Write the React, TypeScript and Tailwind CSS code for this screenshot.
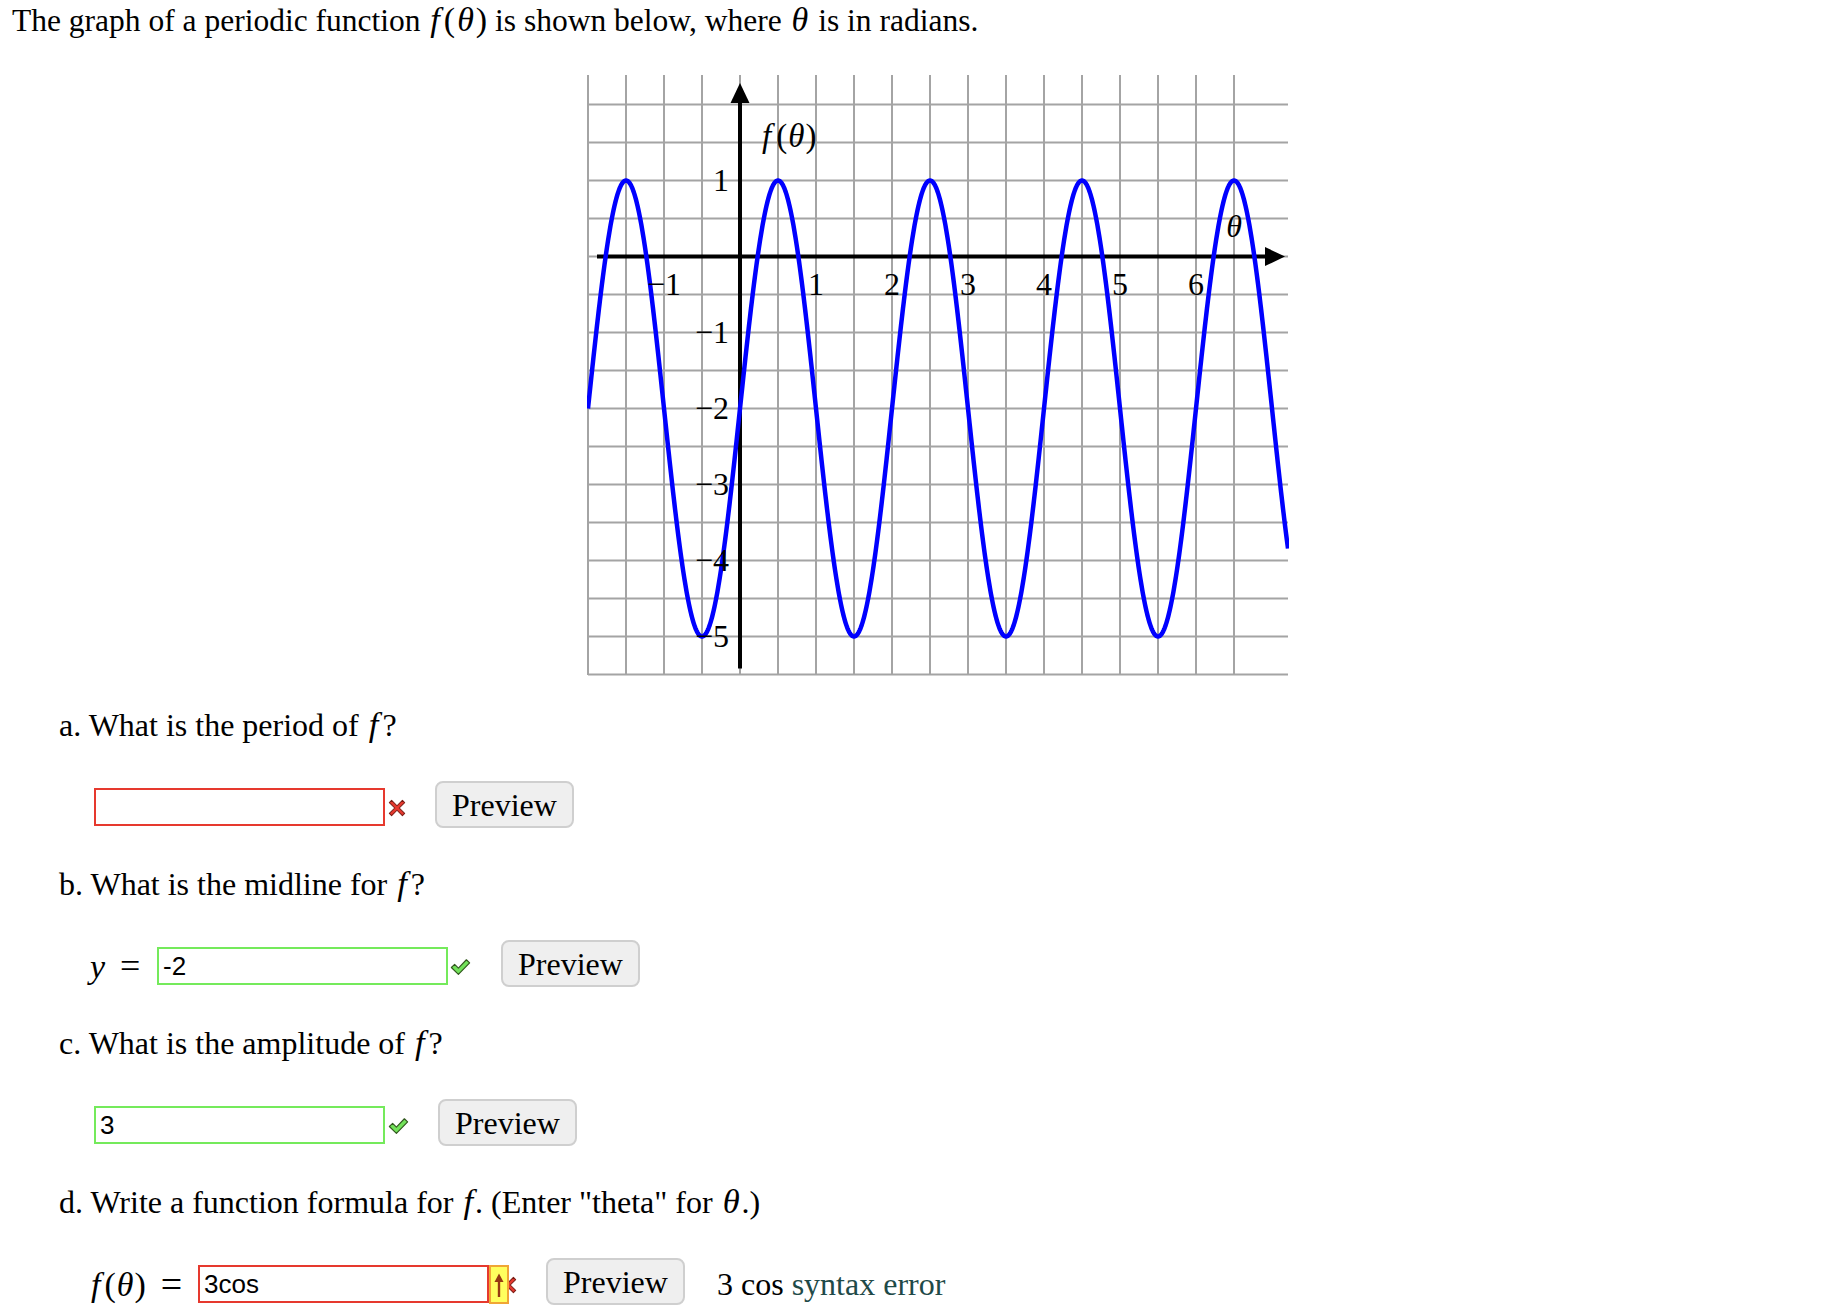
import React from "react";

const UNIT = 76;
const X = (t: number) => 152 + UNIT * t;
const Y = (f: number) => 181.5 - UNIT * f;

function Graph() {
  const vLines = Array.from({ length: 18 }, (_, k) => k * 38);
  const hLines = Array.from({ length: 16 }, (_, k) => Y(2 - 0.5 * k));
  const pts: string[] = [];
  for (let i = 0; i <= 1400; i++) {
    const x = i / 2;
    const t = (x - 152) / UNIT;
    pts.push(`${x},${Y(3 * Math.sin(Math.PI * t) - 2).toFixed(2)}`);
  }
  const xLabels = [-1, 1, 2, 3, 4, 5, 6];
  const yLabels = [1, -1, -2, -3, -4, -5];
  const num = (n: number) => (n < 0 ? `\u2212${-n}` : `${n}`);

  return (
    <svg width="702" height="601" viewBox="0 0 702 601" className="block">
      <g transform="translate(1,0)">
        <g stroke="#a4a4a4" strokeWidth="2">
          {vLines.map((x) => (
            <line key={`v${x}`} x1={x} y1={0} x2={x} y2={600} />
          ))}
          {hLines.map((y) => (
            <line key={`h${y}`} x1={0} y1={y} x2={700} y2={y} />
          ))}
        </g>

        {/* axes */}
        <line x1={9} y1={Y(0)} x2={680} y2={Y(0)} stroke="#000" strokeWidth="4" />
        <polygon points={`677,${Y(0) - 9.5} 697,${Y(0)} 677,${Y(0) + 9.5}`} fill="#000" />
        <line x1={X(0)} y1={25} x2={X(0)} y2={593.5} stroke="#000" strokeWidth="4" />
        <polygon points={`${X(0) - 9.5},28 ${X(0)},8 ${X(0) + 9.5},28`} fill="#000" />

        <polyline points={pts.join(" ")} fill="none" stroke="#0000ff" strokeWidth="4.5" strokeLinejoin="round" />

        <g fontFamily="'Liberation Serif', 'Times New Roman', serif" fontSize="32" fill="#000">
          {xLabels.map((n) => (
            <text key={`x${n}`} x={X(n)} y={220} textAnchor="middle">
              {num(n)}
            </text>
          ))}
          {yLabels.map((n) => (
            <text key={`y${n}`} x={141} y={Y(n) + 10.5} textAnchor="end">
              {num(n)}
            </text>
          ))}
          <text x={174} y={72} fontSize="33">
            <tspan fontStyle="italic">f</tspan>
            <tspan dx="5">(</tspan>
            <tspan fontStyle="italic" dx="1">θ</tspan>
            <tspan dx="1">)</tspan>
          </text>
          <text x={646} y={162} textAnchor="middle" fontStyle="italic">
            θ
          </text>
        </g>
      </g>
    </svg>
  );
}

function XMark() {
  return (
    <svg width="18" height="18" viewBox="0 0 16 16">
      <path
        d="M3.2 1.2 L8 6 L12.8 1.2 L14.8 3.2 L10 8 L14.8 12.8 L12.8 14.8 L8 10 L3.2 14.8 L1.2 12.8 L6 8 L1.2 3.2 Z"
        fill="#e8392f"
        stroke="#7a1c14"
        strokeWidth="0.9"
        strokeLinejoin="round"
      />
    </svg>
  );
}

function CheckMark() {
  return (
    <svg width="21" height="18" viewBox="0 0 20 17">
      <path
        d="M1.3 9 L4.4 6 L8 9.6 L15.6 1.6 L18.7 4.6 L8 15.6 Z"
        fill="#72e25a"
        stroke="#33591f"
        strokeWidth="1.1"
        strokeLinejoin="round"
      />
    </svg>
  );
}

function Preview() {
  return (
    <button className="w-[139px] h-[47px] rounded-[8px] border-2 border-[#cfcfcf] bg-[#efefef] text-[32px] leading-none text-black font-['Liberation_Serif',serif]">
      Preview
    </button>
  );
}

function Field({ value, ok }: { value: string; ok: boolean }) {
  return (
    <input
      readOnly
      value={value}
      className={`mt-[7px] w-[291px] h-[38px] border-2 ${
        ok ? "border-[#74ea5b]" : "border-[#e6392e]"
      } bg-white pl-[4px] text-[26px] text-black outline-none font-['Liberation_Sans',Arial,sans-serif]`}
    />
  );
}

// MathJax-ish inline variable
function M({ children }: { children: React.ReactNode }) {
  return <i className="text-[1.08em] mx-[2px]">{children}</i>;
}

function Question({ children }: { children: React.ReactNode }) {
  return <div className="pl-[59px] text-[32px] leading-[40px]">{children}</div>;
}

export default function App() {
  return (
    <div className="w-[1843px] min-h-[1313px] bg-white text-black font-['Liberation_Serif','Times_New_Roman',serif]">
      <p className="pl-[12px] pt-[2px] h-[37px] text-[31.5px] leading-[35px] whitespace-nowrap">
        The graph of a periodic function <M>f</M>
        <span className="text-[1.08em] ml-[2px]">(</span>
        <M>θ</M>
        <span className="text-[1.08em]">)</span> is shown below, where <M>θ</M> is in radians.
      </p>

      <div className="mt-[38px] ml-[587px]">
        <Graph />
      </div>

      <div className="mt-[28px] flex flex-col">
        {/* a */}
        <Question>
          a. What is the period of <M>f</M>
          <span className="ml-[2px]">?</span>
        </Question>
        <div className="mt-[36px] mb-[35px] h-[47px] flex items-start pl-[94px]">
          <Field value="" ok={false} />
          <div className="mt-[7px] ml-[3px] w-[20px] h-[38px] flex items-center pt-[1px]">
            <XMark />
          </div>
          <div className="ml-[27px]">
            <Preview />
          </div>
        </div>

        {/* b */}
        <Question>
          b. What is the midline for <M>f</M>
          <span className="ml-[2px]">?</span>
        </Question>
        <div className="mt-[36px] mb-[35px] h-[47px] flex items-start pl-[90px]">
          <div className="mt-[7px] w-[67px] h-[38px] flex items-center text-[32px]">
            <i className="text-[34px]">y</i>
            <span className="ml-[15px] text-[36px] leading-none">=</span>
          </div>
          <Field value="-2" ok={true} />
          <div className="mt-[7px] ml-[2px] w-[23px] h-[38px] flex items-center pt-[1px]">
            <CheckMark />
          </div>
          <div className="ml-[28px]">
            <Preview />
          </div>
        </div>

        {/* c */}
        <Question>
          c. What is the amplitude of <M>f</M>
          <span className="ml-[2px]">?</span>
        </Question>
        <div className="mt-[36px] mb-[35px] h-[47px] flex items-start pl-[94px]">
          <Field value="3" ok={true} />
          <div className="mt-[7px] ml-[3px] w-[22px] h-[38px] flex items-center pt-[1px]">
            <CheckMark />
          </div>
          <div className="ml-[28px]">
            <Preview />
          </div>
        </div>

        {/* d */}
        <Question>
          d. Write a function formula for <M>f</M>. (Enter "theta" for <M>θ</M>.)
        </Question>
        <div className="mt-[36px] h-[47px] flex items-start pl-[91px]">
          <div className="mt-[7px] w-[107px] h-[38px] flex items-center text-[34px] whitespace-nowrap">
            <i>f</i>
            <span className="ml-[4px]">(</span>
            <i className="ml-[1px]">θ</i>
            <span className="ml-[1px]">)</span>
            <span className="ml-[15px] text-[38px] leading-none">=</span>
          </div>
          <Field value="3cos" ok={false} />
          <div className="mt-[7px] w-[20px] h-[39px] bg-[#ffff5e] border-2 border-[#f0a535] flex items-center justify-center">
            <svg width="12" height="26" viewBox="0 0 12 26">
              <path d="M6 6 V25" stroke="#973a12" strokeWidth="2.4" />
              <path d="M1.5 10 L6 1.5 L10.5 10 Z" fill="#973a12" />
            </svg>
          </div>
          <div className="mt-[7px] w-[8px] h-[38px] overflow-hidden flex items-center pt-[1px]">
            <div className="-ml-[10px]">
              <XMark />
            </div>
          </div>
          <div className="ml-[29px]">
            <Preview />
          </div>
          <div className="mt-[7px] ml-[32px] h-[38px] flex items-center text-[32px] whitespace-nowrap">
            3<span className="ml-[8px]">cos</span>
            <span className="ml-[8px] text-[#1f4a48]">syntax error</span>
          </div>
        </div>
      </div>
    </div>
  );
}
